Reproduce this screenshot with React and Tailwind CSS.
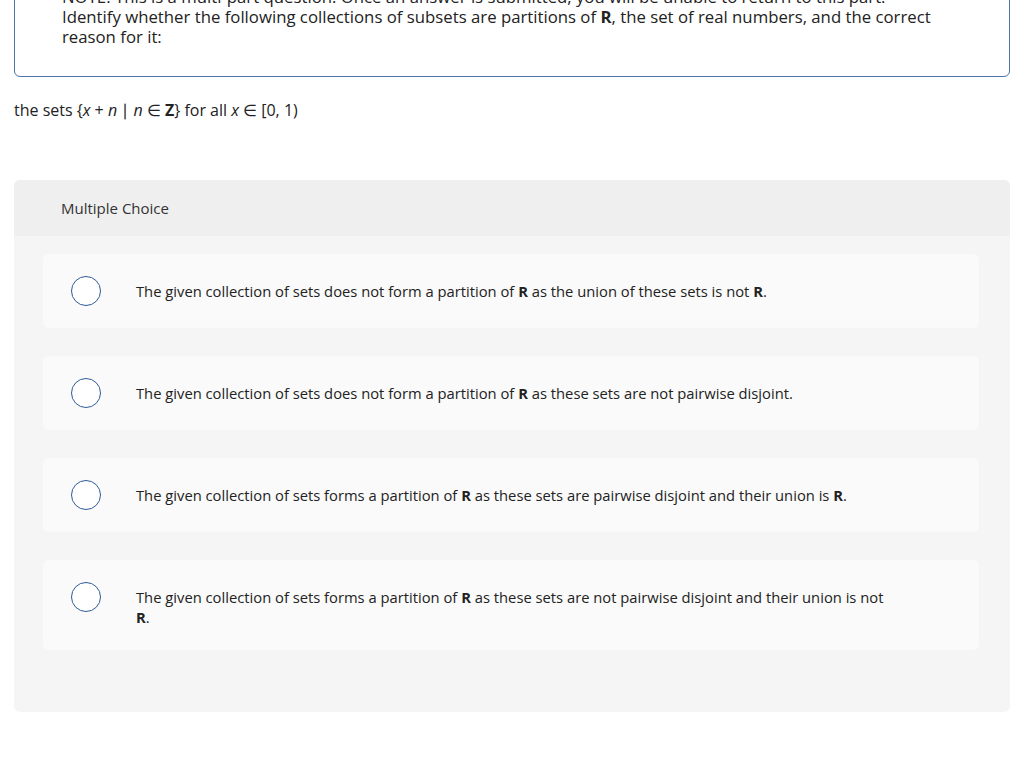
import React from 'react'

const options = [
  <>The given collection of sets does not form a partition of <b>R</b> as the union of these sets is not <b>R</b>.</>,
  <>The given collection of sets does not form a partition of <b>R</b> as these sets are not pairwise disjoint.</>,
  <>The given collection of sets forms a partition of <b>R</b> as these sets are pairwise disjoint and their union is <b>R</b>.</>,
  <>The given collection of sets forms a partition of <b>R</b> as these sets are not pairwise disjoint and their union is not<br /><b>R</b>.</>,
]

function Option({ children, last }) {
  return (
    <div className={`flex items-start rounded-md bg-[#fafafa] pl-[28px] pr-[60px] pt-[27px] ${last ? 'pb-[23px]' : 'pb-[27px]'}`}>
      <span className="-my-[5px] h-[30px] w-[30px] shrink-0 rounded-full border border-[#2f5b96] bg-white" />
      <p className="ml-[35px] text-[14.75px] leading-5 text-[#222]">{children}</p>
    </div>
  )
}

export default function App() {
  return (
    <div className="min-h-[769px] bg-white font-['Open_Sans','Liberation_Sans',sans-serif] text-[#222]">
      <div className="mx-[14px] -mt-[14px] rounded-b-md border border-[#4d74ab] px-[47px] pt-0 pb-[29px] text-[16.75px] leading-5">
        <p>NOTE: This is a multi-part question. Once an answer is submitted, you will be unable to return to this part.</p>
        <p>
          Identify whether the following collections of subsets are partitions of <b>R</b>, the set of real numbers, and the correct
          <br />
          reason for it:
        </p>
      </div>

      <p className="mx-[14px] mt-[23px] text-[16px] leading-5">
        the sets {'{'}<i>x</i> + <i>n</i> ∣ <i>n</i> ∈ <b>Z</b>{'}'} for all <i>x</i> ∈ [0, 1)
      </p>

      <div className="mx-[14px] mt-[60px] rounded-md bg-[#f5f5f5]">
        <div className="flex h-[56px] items-center rounded-t-md bg-[#efefef] px-[47px] text-[15px] text-[#333]">
          Multiple Choice
        </div>
        <div className="flex flex-col gap-[28px] pl-[29px] pr-[31px] pt-[18px] pb-[62px]">
          {options.map((o, i) => (
            <Option key={i} last={i === options.length - 1}>{o}</Option>
          ))}
        </div>
      </div>
    </div>
  )
}
